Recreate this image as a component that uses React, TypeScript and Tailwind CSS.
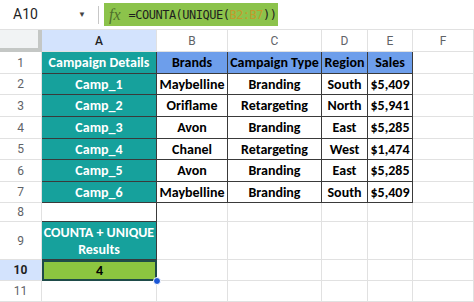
import React from "react";

const cols = ["A", "B", "C", "D", "E", "F"];
const colW = "grid-cols-[42px_115px_71px_94px_46px_45px_61px]";

const data = [
  ["Campaign Details", "Brands", "Campaign Type", "Region", "Sales"],
  ["Camp_1", "Maybelline", "Branding", "South", "$5,409"],
  ["Camp_2", "Oriflame", "Retargeting", "North", "$5,941"],
  ["Camp_3", "Avon", "Branding", "East", "$5,285"],
  ["Camp_4", "Chanel", "Retargeting", "West", "$1,474"],
  ["Camp_5", "Avon", "Branding", "East", "$5,285"],
  ["Camp_6", "Maybelline", "Branding", "South", "$5,409"],
];

const rowH = ["h-[22px]", "h-[21px]", "h-[22px]", "h-[22px]", "h-[21px]", "h-[22px]", "h-[21px]"];

const cellFont = { fontFamily: "Carlito, Lato, 'Liberation Sans', sans-serif" };

function RowNum({ n, h, active }: { n: number; h: string; active?: boolean }) {
  return (
    <div
      className={`${h} flex items-center justify-center border-r border-b border-[#e1e1e1] text-[12px] ${
        active ? "bg-[#d3e3fd] font-bold text-[#1f1f1f]" : "bg-white text-[#5f6368]"
      }`}
    >
      {n}
    </div>
  );
}

function Empty({ h }: { h: string }) {
  return <div className={`${h} border-r border-b border-[#e1e1e1] bg-white`} />;
}

export default function App() {
  return (
    <div className="w-[474px] h-[302px] overflow-hidden bg-white" style={{ fontFamily: "Roboto, 'Liberation Sans', sans-serif" }}>
      {/* formula bar */}
      <div className="h-[30px] flex items-center border-b border-[#e1e1e1]">
        <div className="w-[92px] pl-[13px] flex items-center justify-between pr-[5px]">
          <span className="text-[14px] text-[#1f1f1f]">A10</span>
          <span className="text-[8px] text-[#444] mr-[1px]">▼</span>
        </div>
        <div className="w-px h-[18px] bg-[#c7c7c7] ml-[6px]" />
        <div className="ml-[5px] w-[174px] h-[23px] bg-[#8cc34b] flex items-center pl-[5px]">
          <span className="italic text-[16px] text-[#4f6f2c] mr-[8px]" style={{ fontFamily: "'Liberation Serif', serif" }}>
            fx
          </span>
          <span
            className="text-[12px] tracking-[-0.5px] text-[#1f1f1f]"
            style={{ fontFamily: "'DejaVu Sans Mono', monospace" }}
          >
            =COUNTA(UNIQUE(<span className="text-[#c29a2c]">B2:B7</span>))
          </span>
        </div>
      </div>

      <div className={`grid ${colW}`}>
        {/* header row */}
        <div className="h-[22px] bg-[#f1f3f4] border-r-4 border-b-4 border-[#c4c7c5]" />
        {cols.map((c) => (
          <div
            key={c}
            className={`h-[22px] flex items-center justify-center border-r border-b border-[#e1e1e1] text-[12px] ${
              c === "A" ? "bg-[#d3e3fd] text-[#1f1f1f] font-medium" : "bg-white text-[#5f6368]"
            }`}
          >
            {c}
          </div>
        ))}

        {/* data rows 1-7 */}
        {data.map((row, ri) => (
          <React.Fragment key={ri}>
            <RowNum n={ri + 1} h={rowH[ri]} />
            {row.map((v, ci) => {
              let bg = "bg-white text-black";
              if (ci === 0) bg = "bg-[#16a19c] text-white";
              else if (ri === 0) bg = "bg-[#6d9eeb] text-black";
              return (
                <div
                  key={ci}
                  className={`${rowH[ri]} ${bg} flex items-center justify-center border-r border-b border-[#3a3a3a] text-[14px] font-bold whitespace-nowrap`}
                  style={cellFont}
                >
                  {v}
                </div>
              );
            })}
            <Empty h={rowH[ri]} />
          </React.Fragment>
        ))}

        {/* row 8 */}
        <RowNum n={8} h="h-[19px]" />
        <div className="h-[19px] border-r border-b border-[#3a3a3a] bg-white" />
        {[0, 1, 2, 3, 4].map((i) => (
          <Empty key={i} h="h-[19px]" />
        ))}

        {/* row 9 */}
        <RowNum n={9} h="h-[38px]" />
        <div
          className="h-[38px] bg-[#16a19c] text-white border-r border-b border-[#3a3a3a] flex flex-col items-center justify-center text-[14px] font-bold leading-[17px]"
          style={cellFont}
        >
          <span>COUNTA + UNIQUE</span>
          <span>Results</span>
        </div>
        {[0, 1, 2, 3, 4].map((i) => (
          <Empty key={i} h="h-[38px]" />
        ))}

        {/* row 10 */}
        <RowNum n={10} h="h-[21px]" active />
        <div className="relative h-[21px]">
          <div
            className="h-full bg-[#8cc540] border-2 border-[#1e4b49] flex items-center justify-center text-[14px] font-bold text-black"
            style={cellFont}
          >
            4
          </div>
          <div className="absolute -right-[4px] -bottom-[4px] w-[8px] h-[8px] rounded-full bg-[#1a56d6] border border-white" />
        </div>
        {[0, 1, 2, 3, 4].map((i) => (
          <Empty key={i} h="h-[21px]" />
        ))}

        {/* row 11 */}
        <RowNum n={11} h="h-[21px]" />
        {[0, 1, 2, 3, 4, 5].map((i) => (
          <Empty key={i} h="h-[21px]" />
        ))}
      </div>
    </div>
  );
}
